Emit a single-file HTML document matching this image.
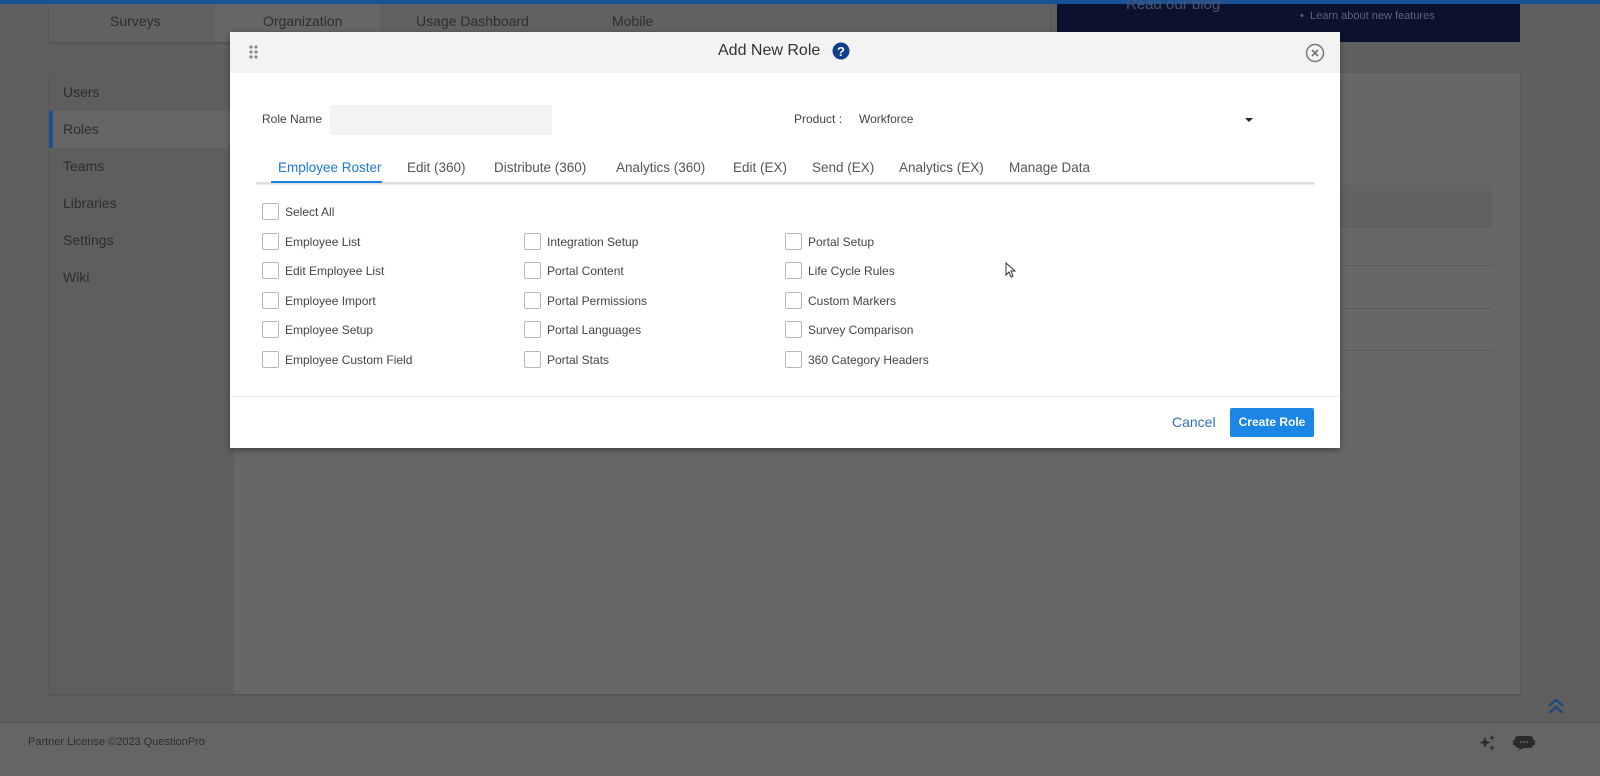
<!DOCTYPE html>
<html><head><meta charset="utf-8"><style>
*{margin:0;padding:0;box-sizing:border-box}
body{width:1600px;height:776px;background:#5f5f5f;font-family:"Liberation Sans",sans-serif;position:relative;overflow:hidden;color:#333}
.a{position:absolute;white-space:nowrap}
.dk{color:#2e2e2e;font-size:14px}
.cb{position:absolute;width:17px;height:17px;border:1px solid #b8b8b8;border-radius:2px;background:#fff}
.lb{position:absolute;font-size:12px;color:#444;white-space:nowrap;margin-top:2px}
.tab{position:absolute;top:160px;font-size:13.5px;color:#555;white-space:nowrap}
</style></head><body>
<div class="a" style="left:0;top:0;width:1600px;height:4px;background:#1b5296"></div>
<div class="a" style="left:49px;top:4px;width:1001px;height:38px;background:#616161;box-shadow:0 1px 2px rgba(0,0,0,.2)"></div>
<div class="a" style="left:215px;top:4px;width:165px;height:38px;background:#666"></div>
<div class="a dk" style="left:110px;top:13px">Surveys</div>
<div class="a dk" style="left:263px;top:13px">Organization</div>
<div class="a dk" style="left:416px;top:13px">Usage Dashboard</div>
<div class="a dk" style="left:612px;top:13px">Mobile</div>
<div class="a" style="left:1057px;top:4px;width:463px;height:38px;background:#0a1230"></div>
<div class="a" style="left:1126px;top:-4px;color:#4a5470;font-size:15px">Read our blog</div>
<div class="a" style="left:1300px;top:10px;color:#5a6380;font-size:11px">•&nbsp;&nbsp;Learn about new features</div>

<div class="a" style="left:49px;top:73px;width:1471px;height:621px;background:#676767;box-shadow:0 1px 2px rgba(0,0,0,.2)"></div>
<div class="a" style="left:49px;top:73px;width:185px;height:621px;background:#5e5e5e"></div>
<div class="a" style="left:49px;top:111px;width:185px;height:37px;background:#666;border-left:4px solid #1a5296"></div>
<div class="a dk" style="left:63px;top:84px">Users</div>
<div class="a dk" style="left:63px;top:121px">Roles</div>
<div class="a dk" style="left:63px;top:158px">Teams</div>
<div class="a dk" style="left:63px;top:195px">Libraries</div>
<div class="a dk" style="left:63px;top:232px">Settings</div>
<div class="a dk" style="left:63px;top:269px">Wiki</div>
<div class="a" style="left:1340px;top:185px;width:152px;height:43px;background:#626262;border-bottom:1px solid #5c5c5c"></div>
<div class="a" style="left:1340px;top:265px;width:152px;height:1px;background:#5a5a5a"></div>
<div class="a" style="left:1340px;top:308px;width:152px;height:1px;background:#5a5a5a"></div>
<div class="a" style="left:1340px;top:350px;width:152px;height:1px;background:#5a5a5a"></div>

<div class="a" style="left:0;top:722px;width:1600px;height:54px;background:#656565;border-top:1px solid #5a5a5a"></div>
<div class="a" style="left:28px;top:736px;font-size:11px;color:#2e2e2e">Partner License ©2023 QuestionPro</div>
<svg class="a" style="left:1546px;top:697px" width="20" height="18" viewBox="0 0 20 18"><path d="M3 9l7-6 7 6M3 16l7-6 7 6" fill="none" stroke="#1a4a80" stroke-width="2.2"/></svg>
<svg class="a" style="left:1479px;top:734px" width="18" height="18" viewBox="0 0 18 18"><path d="M6 3l1.5 4 4 1.5-4 1.5L6 14l-1.5-4-4-1.5 4-1.5z M13 1l.8 2 2 .8-2 .8-.8 2-.8-2-2-.8 2-.8z M13 11l.8 2 2 .8-2 .8-.8 2-.8-2-2-.8 2-.8z" fill="#2a2a2a"/></svg>
<svg class="a" style="left:1512px;top:734px" width="24" height="18" viewBox="0 0 24 18"><rect x="3" y="2" width="18" height="12" rx="3" fill="#2a2a2a"/><path d="M8 14l-2 3 5-3z" fill="#2a2a2a"/><rect x="1" y="6" width="2" height="5" fill="#2a2a2a"/><rect x="21" y="6" width="2" height="5" fill="#2a2a2a"/><circle cx="9" cy="8" r="1" fill="#666"/><circle cx="12" cy="8" r="1" fill="#666"/><circle cx="15" cy="8" r="1" fill="#666"/></svg>

<div class="a" style="left:230px;top:32px;width:1110px;height:416px;background:#fff;box-shadow:0 2px 6px rgba(0,0,0,.35)"></div>
<div class="a" style="left:230px;top:32px;width:1110px;height:41px;background:#f3f3f3"></div>
<svg class="a" style="left:249px;top:45px" width="10" height="14" viewBox="0 0 10 14"><g fill="#888"><circle cx="2" cy="2" r="1.6"/><circle cx="7" cy="2" r="1.6"/><circle cx="2" cy="7" r="1.6"/><circle cx="7" cy="7" r="1.6"/><circle cx="2" cy="12" r="1.6"/><circle cx="7" cy="12" r="1.6"/></g></svg>
<div class="a" style="left:718px;top:42px;font-size:16px;color:#333">Add New Role</div>
<svg class="a" style="left:832px;top:42px" width="18" height="18" viewBox="0 0 18 18"><circle cx="9" cy="9" r="8.5" fill="#0d3f8c"/><text x="9" y="14" text-anchor="middle" font-family="Liberation Sans" font-weight="bold" font-size="13" fill="#fff">?</text></svg>
<svg class="a" style="left:1305px;top:43px" width="20" height="20" viewBox="0 0 20 20"><circle cx="10" cy="10" r="8.5" fill="none" stroke="#777" stroke-width="1.5"/><path d="M7 7l6 6M13 7l-6 6" stroke="#777" stroke-width="1.6"/></svg>

<div class="a" style="left:262px;top:112px;font-size:12px;color:#444">Role Name</div>
<div class="a" style="left:330px;top:105px;width:222px;height:30px;background:#f3f3f3"></div>
<div class="a" style="left:794px;top:112px;font-size:12px;color:#444">Product :</div>
<div class="a" style="left:859px;top:112px;font-size:12px;color:#444">Workforce</div>
<div class="a" style="left:1245px;top:118px;border-left:4px solid transparent;border-right:4px solid transparent;border-top:4px solid #222"></div>

<div class="a" style="left:256px;top:182px;width:1059px;height:2px;background:#ddd;box-shadow:0 1px 1px rgba(0,0,0,.08)"></div>
<div class="a" style="left:271px;top:181px;width:111px;height:2px;background:#1b82e0"></div>
<div class="tab" style="left:278px;color:#1b7ad6">Employee Roster</div>
<div class="tab" style="left:407px">Edit (360)</div>
<div class="tab" style="left:494px">Distribute (360)</div>
<div class="tab" style="left:616px">Analytics (360)</div>
<div class="tab" style="left:733px">Edit (EX)</div>
<div class="tab" style="left:812px">Send (EX)</div>
<div class="tab" style="left:899px">Analytics (EX)</div>
<div class="tab" style="left:1009px">Manage Data</div>

<div class="cb" style="left:262px;top:203px"></div><div class="lb" style="left:285px;top:203px">Select All</div>

<div class="cb" style="left:262px;top:233px"></div><div class="lb" style="left:285px;top:233px">Employee List</div>
<div class="cb" style="left:262px;top:262px"></div><div class="lb" style="left:285px;top:262px">Edit Employee List</div>
<div class="cb" style="left:262px;top:292px"></div><div class="lb" style="left:285px;top:292px">Employee Import</div>
<div class="cb" style="left:262px;top:321px"></div><div class="lb" style="left:285px;top:321px">Employee Setup</div>
<div class="cb" style="left:262px;top:351px"></div><div class="lb" style="left:285px;top:351px">Employee Custom Field</div>

<div class="cb" style="left:524px;top:233px"></div><div class="lb" style="left:547px;top:233px">Integration Setup</div>
<div class="cb" style="left:524px;top:262px"></div><div class="lb" style="left:547px;top:262px">Portal Content</div>
<div class="cb" style="left:524px;top:292px"></div><div class="lb" style="left:547px;top:292px">Portal Permissions</div>
<div class="cb" style="left:524px;top:321px"></div><div class="lb" style="left:547px;top:321px">Portal Languages</div>
<div class="cb" style="left:524px;top:351px"></div><div class="lb" style="left:547px;top:351px">Portal Stats</div>

<div class="cb" style="left:785px;top:233px"></div><div class="lb" style="left:808px;top:233px">Portal Setup</div>
<div class="cb" style="left:785px;top:262px"></div><div class="lb" style="left:808px;top:262px">Life Cycle Rules</div>
<div class="cb" style="left:785px;top:292px"></div><div class="lb" style="left:808px;top:292px">Custom Markers</div>
<div class="cb" style="left:785px;top:321px"></div><div class="lb" style="left:808px;top:321px">Survey Comparison</div>
<div class="cb" style="left:785px;top:351px"></div><div class="lb" style="left:808px;top:351px">360 Category Headers</div>

<svg class="a" style="left:1005px;top:262px" width="12" height="16" viewBox="0 0 12 16"><path d="M1 1v12l3-3 2 5 2-1-2-5h4z" fill="#fff" stroke="#333" stroke-width="1"/></svg>

<div class="a" style="left:230px;top:396px;width:1110px;height:1px;background:#eee"></div>
<div class="a" style="left:1172px;top:414px;font-size:14px;color:#2f72b8">Cancel</div>
<div class="a" style="left:1230px;top:408px;width:84px;height:29px;background:#1b86e6;border-radius:2px;color:#fff;font-size:12px;font-weight:bold;text-align:center;line-height:29px">Create Role</div>
</body></html>
